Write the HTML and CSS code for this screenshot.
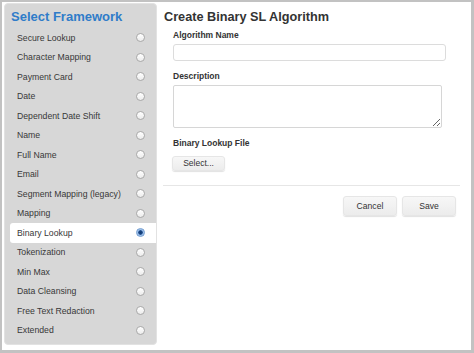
FILE: index.html
```html
<!DOCTYPE html>
<html>
<head>
<meta charset="utf-8">
<link rel="stylesheet" href="styles.css">
</head>
<body>
<div class="frame">
  <aside class="sidebar">
    <h2 class="side-title">Select Framework</h2>
    <ul class="fw-list">
      <li class="fw-item"><span>Secure Lookup</span><span class="radio"></span></li>
      <li class="fw-item"><span>Character Mapping</span><span class="radio"></span></li>
      <li class="fw-item"><span>Payment Card</span><span class="radio"></span></li>
      <li class="fw-item"><span>Date</span><span class="radio"></span></li>
      <li class="fw-item"><span>Dependent Date Shift</span><span class="radio"></span></li>
      <li class="fw-item"><span>Name</span><span class="radio"></span></li>
      <li class="fw-item"><span>Full Name</span><span class="radio"></span></li>
      <li class="fw-item"><span>Email</span><span class="radio"></span></li>
      <li class="fw-item"><span>Segment Mapping (legacy)</span><span class="radio"></span></li>
      <li class="fw-item"><span>Mapping</span><span class="radio"></span></li>
      <li class="fw-item selected"><span>Binary Lookup</span><span class="radio checked"></span></li>
      <li class="fw-item"><span>Tokenization</span><span class="radio"></span></li>
      <li class="fw-item"><span>Min Max</span><span class="radio"></span></li>
      <li class="fw-item"><span>Data Cleansing</span><span class="radio"></span></li>
      <li class="fw-item"><span>Free Text Redaction</span><span class="radio"></span></li>
      <li class="fw-item"><span>Extended</span><span class="radio"></span></li>
    </ul>
  </aside>
  <main class="main">
    <h1 class="main-title">Create Binary SL Algorithm</h1>
    <div class="form">
      <label class="label">Algorithm Name</label>
      <input class="input" type="text">
      <label class="label gap">Description</label>
      <textarea class="textarea"></textarea>
      <label class="label gap">Binary Lookup File</label>
      <div><button class="btn btn-small">Select...</button></div>
    </div>
    <hr class="divider">
    <div class="actions">
      <button class="btn btn-action">Cancel</button>
      <button class="btn btn-action">Save</button>
    </div>
  </main>
</div>
</body>
</html>
```

FILE: styles.css
```css
* { box-sizing: border-box; }
html, body { margin: 0; padding: 0; background: #ffffff; }
body { font-family: "Liberation Sans", Arial, Helvetica, sans-serif; color: #333333; }

.frame {
  width: 474px;
  height: 353px;
  border-style: solid;
  border-color: #c2c2c2;
  border-width: 2px 3px 3px 2px;
  display: flex;
  background: #ffffff;
}

.sidebar {
  width: 153px;
  height: 342px;
  margin: 1px 0 0 2px;
  background: #d7d7d7;
  border: 1px solid #e2e2e2;
  border-radius: 4px;
  padding-top: 5px;
  flex-shrink: 0;
}

.side-title {
  margin: 0 0 3px 6px;
  font-size: 13px;
  line-height: 16px;
  font-weight: bold;
  color: #2f7cc9;
}

.fw-list {
  list-style: none;
  margin: 0;
  padding: 0;
}

.fw-item {
  height: 19.5px;
  display: flex;
  align-items: center;
  justify-content: space-between;
  padding: 0 11.5px 0 12px;
  font-size: 8.7px;
  color: #383838;
}

.fw-item.selected {
  background: #ffffff;
  margin-left: 5px;
  padding-left: 7px;
  border-radius: 3px 0 0 3px;
}

.radio {
  width: 9px;
  height: 9px;
  border-radius: 50%;
  border: 1px solid #a9a9a9;
  background: linear-gradient(#ffffff, #ececec);
  flex-shrink: 0;
}

.radio.checked {
  border-color: #6f9bd0;
  background: radial-gradient(circle, #123a70 0, #1a4787 1.9px, #8fb6e6 2.5px, #c4daf2 4px);
}

.main {
  flex: 1;
  padding-top: 7px;
}

.main-title {
  margin: 0 0 4px 7px;
  font-size: 12.7px;
  line-height: 16px;
  font-weight: bold;
  color: #333333;
}

.form {
  padding-left: 16px;
  display: flex;
  flex-direction: column;
  align-items: flex-start;
}

.label {
  display: block;
  font-size: 8.5px;
  line-height: 12px;
  font-weight: bold;
  color: #333333;
  margin-bottom: 3px;
}

.label.gap { margin-top: 9px; }

.input {
  width: 273px;
  height: 17px;
  border: 1px solid #dcdcdc;
  border-radius: 3px;
  background: #ffffff;
  margin: 0;
  padding: 0;
}

.textarea {
  width: 269px;
  height: 43px;
  border: 1px solid #d6d6d6;
  border-radius: 2px;
  background: #ffffff;
  margin: 0;
  padding: 0;
  resize: vertical;
  display: block;
}

.btn {
  font-family: "Liberation Sans", Arial, Helvetica, sans-serif;
  color: #333333;
  border: 1px solid #e6e6e6;
  border-radius: 3px;
  background: linear-gradient(#f7f7f7, #ececec);
  box-shadow: 0 1px 1px rgba(0, 0, 0, 0.12);
  padding: 0;
  margin: 0;
}

.btn-small {
  width: 53px;
  height: 15px;
  font-size: 8.5px;
  margin-top: 1px;
  margin-left: -1px;
}

.divider {
  border: 0;
  border-top: 1px solid #e6e6e6;
  margin: 14px 11px 0 6px;
  height: 0;
}

.actions {
  display: flex;
  justify-content: flex-end;
  gap: 5px;
  margin-top: 10px;
  padding-right: 15px;
}

.btn-action {
  width: 54px;
  height: 20px;
  font-size: 8.6px;
}
```
